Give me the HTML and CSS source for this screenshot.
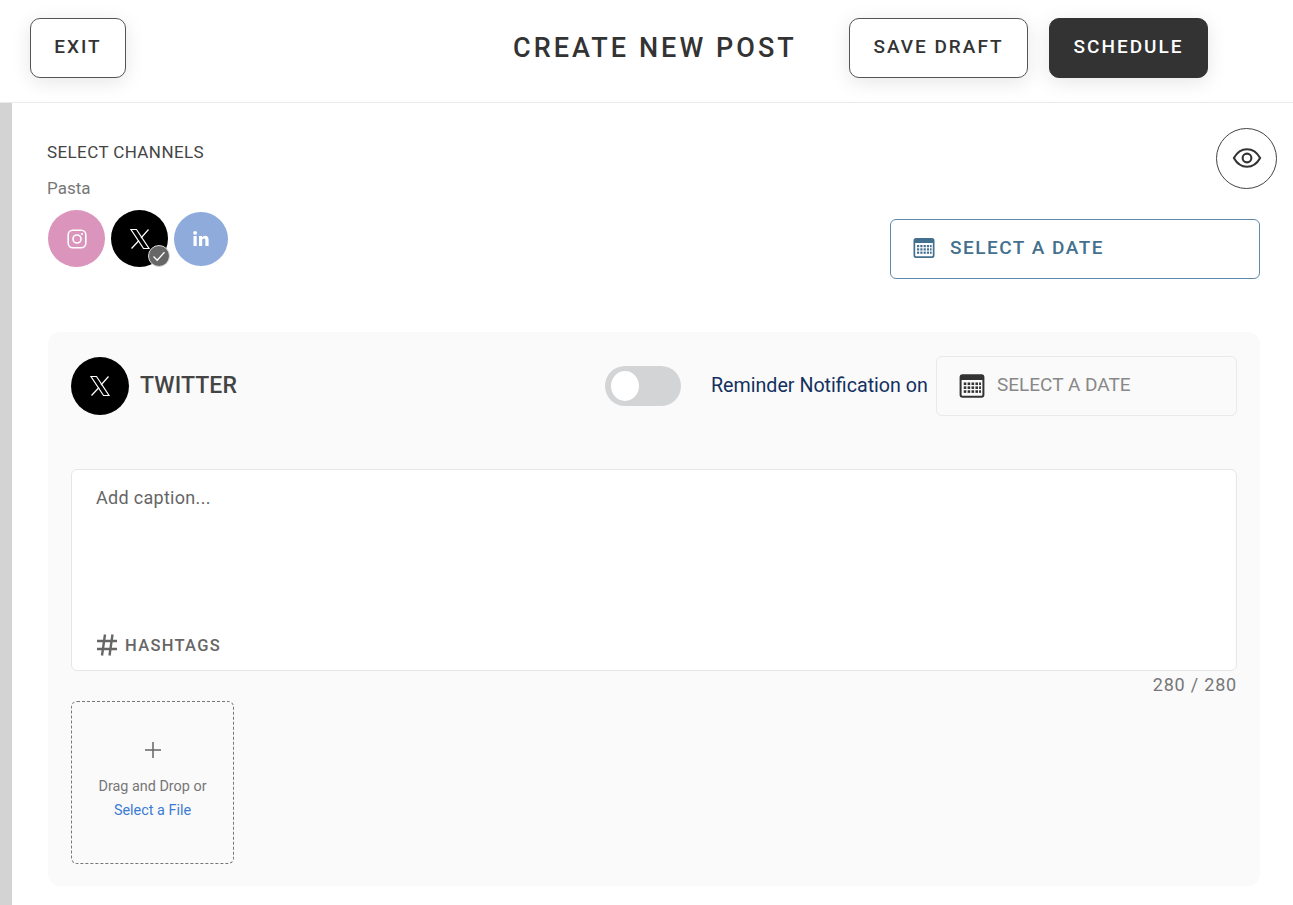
FILE: index.html
```html
<!DOCTYPE html>
<html lang="en">
<head>
<meta charset="utf-8">
<title>Create New Post</title>
<link rel="stylesheet" href="styles.css">
</head>
<body>
<header class="topbar">
  <button class="btn btn-exit">EXIT</button>
  <h1 class="title">CREATE NEW POST</h1>
  <button class="btn btn-draft">SAVE DRAFT</button>
  <button class="btn btn-dark">SCHEDULE</button>
</header>
<div class="shell">
  <div class="strip"></div>
  <main class="main">
    <button class="eye" aria-label="Preview">
      <svg width="30" height="30" viewBox="0 0 24 24" fill="none" stroke="#333" stroke-width="1.700" stroke-linejoin="round"><path d="M1.500 12C4 7.500 7.800 5 12 5S20 7.500 22.500 12C20 16.500 16.200 19 12 19S4 16.500 1.500 12Z"/><circle cx="12" cy="12" r="3.500"/></svg>
    </button>
    <section class="channels">
      <div class="channels-left">
        <div class="label">SELECT CHANNELS</div>
        <div class="group">Pasta</div>
        <div class="icons">
          <span class="ch ch-ig">
            <svg width="20" height="20" viewBox="0 0 20 20" fill="none" stroke="#fff" stroke-width="1.600"><rect x="1.200" y="1.200" width="17.600" height="17.600" rx="4.500"/><circle cx="10" cy="10" r="4"/><circle cx="15" cy="5" r="0.700" fill="#fff" stroke-width="1"/></svg>
          </span>
          <span class="ch ch-x">
            <svg width="24" height="24" viewBox="0 0 24 24" fill="none" stroke="#fff" stroke-width="1.200"><path d="M3 2.500h5.500L21 21.500h-5.500Z"/><path d="M20.500 2.500L13 11M11 13.500L3.500 21.500"/></svg>
            <span class="check"><svg width="16" height="16" viewBox="0 0 16 16" fill="none" stroke="#fff" stroke-width="1.300"><path d="M2.500 8.500L6.200 12.200L13.500 4.200"/></svg></span>
          </span>
          <span class="ch ch-in"><svg width="18" height="18" viewBox="0 0 18 18" fill="#fff"><rect x="1.500" y="6" width="3.200" height="10"/><circle cx="3.100" cy="2.900" r="1.900"/><path d="M7 6h3v1.500C10.600 6.500 11.700 5.800 13.200 5.800c2.600 0 3.400 1.700 3.400 4.200v6h-3.200v-5.300c0-1.300-.3-2.200-1.500-2.200s-1.700.9-1.700 2.200V16H7z"/></svg></span>
        </div>
      </div>
      <button class="date-main">
        <svg class="cal" width="22" height="22" viewBox="0 0 22 22"><use href="#calendar"/></svg>
        <span>SELECT A DATE</span>
      </button>
    </section>
    <section class="card">
      <div class="card-head">
        <span class="avatar"><svg width="24" height="24" viewBox="0 0 24 24" fill="none" stroke="#fff" stroke-width="1.200"><path d="M3 2.500h5.500L21 21.500h-5.500Z"/><path d="M20.500 2.500L13 11M11 13.500L3.500 21.500"/></svg></span>
        <h2 class="net">TWITTER</h2>
        <span class="toggle"><span class="knob"></span></span>
        <span class="reminder">Reminder Notification on</span>
        <div class="date-input">
          <svg class="cal-dark" width="26" height="26" viewBox="0 0 22 22"><use href="#calendar"/></svg>
          <span>SELECT A DATE</span>
        </div>
      </div>
      <div class="caption">
        <div class="placeholder">Add caption...</div>
        <div class="hashtags">
          <svg width="22" height="24" viewBox="0 0 22 24" fill="none" stroke="#666" stroke-width="2.400"><path d="M9 1.500L6 22.500M16.500 1.500L13.500 22.500M1 8h20M1 16h20"/></svg>
          <span>HASHTAGS</span>
        </div>
      </div>
      <div class="counter">280 / 280</div>
      <div class="drop">
        <svg width="20" height="20" viewBox="0 0 20 20" stroke="#666" stroke-width="1.500"><path d="M10 2v16M2 10h16"/></svg>
        <div class="drop-text">Drag and Drop or</div>
        <div class="drop-link">Select a File</div>
      </div>
    </section>
  </main>
</div>
<svg class="defs" width="0" height="0">
  <symbol id="calendar" viewBox="0 0 22 22">
    <path fill="currentColor" fill-rule="evenodd" d="M3 1h16a2.500 2.500 0 0 1 2.500 2.500v15A2.500 2.500 0 0 1 19 21H3A2.500 2.500 0 0 1 .5 18.500v-15A2.500 2.500 0 0 1 3 1ZM2.200 6v12.500c0 .5.400.800.800.800h16c.5 0 .8-.3.800-.8V6Z"/>
    <g fill="currentColor">
      <rect x="4" y="8" width="2.200" height="2.200"/><rect x="7.300" y="8" width="2.200" height="2.200"/><rect x="10.600" y="8" width="2.200" height="2.200"/><rect x="13.900" y="8" width="2.200" height="2.200"/><rect x="17" y="8" width="1.600" height="2.200"/>
      <rect x="4" y="11.300" width="2.200" height="2.200"/><rect x="7.300" y="11.300" width="2.200" height="2.200"/><rect x="10.600" y="11.300" width="2.200" height="2.200"/><rect x="13.900" y="11.300" width="2.200" height="2.200"/><rect x="17" y="11.300" width="1.600" height="2.200"/>
      <rect x="4" y="14.600" width="2.200" height="2.200"/><rect x="7.300" y="14.600" width="2.200" height="2.200"/><rect x="10.600" y="14.600" width="2.200" height="2.200"/><rect x="13.900" y="14.600" width="2.200" height="2.200"/><rect x="17" y="14.600" width="1.600" height="2.200"/>
    </g>
  </symbol>
</svg>
</body>
</html>
```
FILE: styles.css
```css
* { box-sizing: border-box; }
html, body { margin: 0; height: 905px; overflow: hidden; }
body { font-family: Roboto, "Liberation Sans", Arial, sans-serif; background: #fff; color: #333; }
button { font-family: inherit; cursor: pointer; }
.defs { position: absolute; }

.topbar { display: flex; align-items: center; height: 103px; padding: 0 0 7px 30px; border-bottom: 1px solid #ebebeb; }
.btn { height: 60px; border-radius: 10px; border: 1px solid #555; background: #fff; color: #333; font-size: 19px; font-weight: 500; letter-spacing: 2px; box-shadow: 0 4px 20px rgba(0,0,0,.1); padding: 0 0 2px; }
.btn-exit { width: 96px; }
.btn-draft { width: 179px; }
.btn-dark { width: 159px; margin-left: 21px; background: #333; color: #fff; border-color: #333; }
.title { margin: 0 54px 0 387px; font-size: 27px; font-weight: 500; letter-spacing: 3.050px; color: #333; white-space: nowrap; width: 282px; }

.shell { display: flex; height: 802px; }
.strip { width: 12px; background: #d3d3d3; flex: none; }
.main { position: relative; flex: 1; padding: 0 33px 0 36px; }

.eye { position: absolute; left: 1204px; top: 25px; width: 61px; height: 61px; border-radius: 50%; border: 1px solid #444; background: #fff; display: flex; align-items: center; justify-content: center; padding: 0 0 2px; }

.channels { display: flex; justify-content: space-between; height: 229px; }
.channels-left { padding-top: 39px; margin-left: -1px; }
.label { font-size: 17px; line-height: 20px; letter-spacing: .4px; color: #444; }
.group { margin-top: 16px; font-size: 17px; line-height: 20px; color: #777; }
.icons { display: flex; align-items: center; gap: 6px; margin: 12px 0 0 1px; }
.ch { position: relative; display: flex; align-items: center; justify-content: center; width: 57px; height: 57px; border-radius: 50%; }
.ch-ig { background: #db94bc; }
.ch-x { background: #000; }
.ch-in { background: #8eabdc; width: 54px; height: 54px; }
.check { position: absolute; right: -2px; bottom: 0; width: 22px; height: 22px; border-radius: 50%; background: #666; border: 1px solid #ddd; display: flex; align-items: center; justify-content: center; }

.date-main { display: flex; align-items: center; gap: 15px; width: 370px; height: 60px; margin-top: 116px; padding: 0 0 3px 22px; background: #fff; border: 1px solid #5e89a8; border-radius: 6px; color: #44708f; font-size: 19px; font-weight: 500; letter-spacing: 1.500px; }
.cal { color: #44708f; }
.cal-dark { color: #333; }

.card { background: #fafafa; border-radius: 12px; padding: 24px 23px 22px; height: 554px; }
.card-head { display: flex; align-items: center; height: 60px; }
.avatar { width: 58px; height: 58px; border-radius: 50%; background: #000; display: flex; align-items: center; justify-content: center; flex: none; }
.net { margin: 0 0 2px 11px; font-size: 23px; font-weight: 500; letter-spacing: .1px; color: #444; width: 465px; }
.toggle { width: 76px; height: 40px; border-radius: 20px; background: #d3d4d6; padding: 5px 6px; flex: none; }
.knob { display: block; width: 28px; height: 30px; border-radius: 50%; background: #fff; }
.reminder { margin: 0 0 2px 30px; width: 225px; font-size: 19.650px; color: #13305f; white-space: nowrap; }
.date-input { display: flex; align-items: center; gap: 12px; width: 301px; height: 60px; padding-left: 22px; border: 1px solid #e9e9e9; border-radius: 6px; color: #888; font-size: 19px; }
.date-input span { margin-bottom: 3px; }

.caption { display: flex; flex-direction: column; justify-content: space-between; height: 202px; margin-top: 53px; padding: 16px 24px 13px; background: #fff; border: 1px solid #e6e6e6; border-radius: 6px; }
.placeholder { font-size: 18px; line-height: 24px; letter-spacing: .3px; color: #666; }
.hashtags { display: flex; align-items: center; gap: 7px; color: #666; font-size: 16.500px; font-weight: 500; letter-spacing: 1.300px; }
.counter { text-align: right; font-size: 18px; line-height: 24px; letter-spacing: .8px; color: #777; margin-top: 2px; }
.drop { display: flex; flex-direction: column; align-items: center; width: 163px; height: 163px; margin-top: 4px; padding-top: 38px; border: 1px dashed #777; border-radius: 6px; }
.drop-text { margin-top: 15px; font-size: 14.400px; line-height: 24px; color: #777; }
.drop-link { font-size: 14.400px; line-height: 24px; color: #3a7bd5; }
```
